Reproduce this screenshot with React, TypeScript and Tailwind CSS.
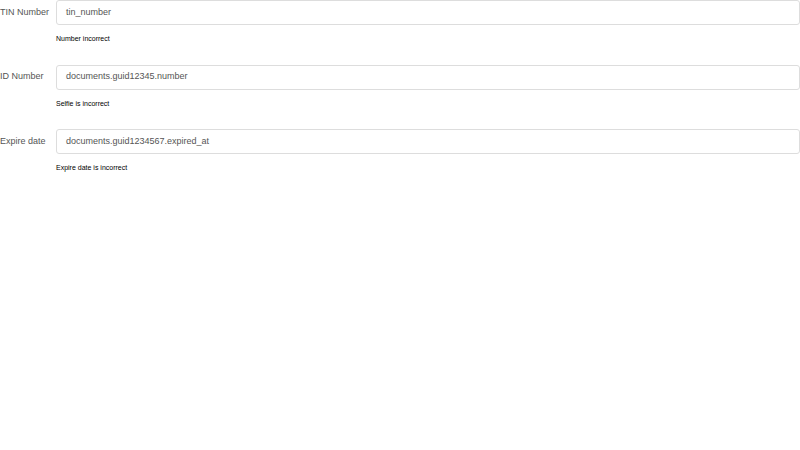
import React from 'react';

const fields = [
  { label: 'TIN Number', value: 'tin_number', error: 'Number incorrect' },
  { label: 'ID Number', value: 'documents.guid12345.number', error: 'Selfie is incorrect' },
  { label: 'Expire date', value: 'documents.guid1234567.expired_at', error: 'Expire date is incorrect' },
];

export default function App() {
  return (
    <div className="w-[800px] h-[450px] bg-white font-['Liberation_Sans',Arial,sans-serif]">
      {fields.map((f) => (
        <div key={f.label} className="h-[64.5px]">
          <div className="flex items-center">
            <label className="w-[56px] shrink-0 whitespace-nowrap text-[9px] text-[#555]">{f.label}</label>
            <div className="flex-1 h-[25px] border border-[#ddd] rounded-[3px] flex items-center pl-[9px] text-[9px] text-[#555]">
              {f.value}
            </div>
          </div>
          <div className="pl-[56px] mt-[9px] text-[7px] leading-[9px] text-black">{f.error}</div>
        </div>
      ))}
    </div>
  );
}
